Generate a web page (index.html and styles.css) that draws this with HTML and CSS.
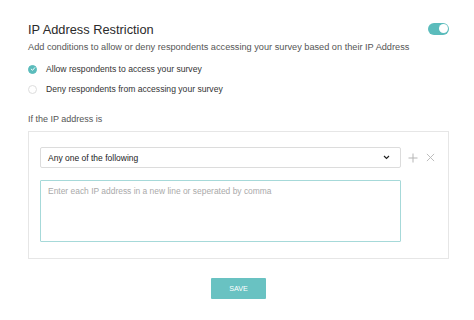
FILE: index.html
```html
<!DOCTYPE html>
<html>
<head>
<meta charset="utf-8">
<link rel="stylesheet" href="styles.css">
</head>
<body>
<div class="page">
  <div class="header">
    <h1 class="title">IP Address Restriction</h1>
    <span class="toggle"><span class="knob"></span></span>
  </div>
  <p class="subtitle">Add conditions to allow or deny respondents accessing your survey based on their IP Address</p>
  <div class="options">
    <label class="option"><span class="radio checked"><svg viewBox="0 0 10 10" width="6" height="6"><path d="M2 5.2 L4.2 7.2 L8 2.8" fill="none" stroke="#fff" stroke-width="1.6" stroke-linecap="round" stroke-linejoin="round"/></svg></span>Allow respondents to access your survey</label>
    <label class="option"><span class="radio"></span>Deny respondents from accessing your survey</label>
  </div>
  <div class="cond-label">If the IP address is</div>
  <div class="box">
    <div class="row">
      <div class="select">
        <span>Any one of the following</span>
        <svg class="chev" viewBox="0 0 8 6" width="7" height="5"><path d="M1 1.2 L4 4.2 L7 1.2" fill="none" stroke="#222" stroke-width="1.4"/></svg>
      </div>
      <div class="actions">
        <svg viewBox="0 0 10 10" width="10" height="10"><path d="M5 0.5 V9.5 M0.5 5 H9.5" stroke="#b5b5b5" stroke-width="1"/></svg>
        <svg viewBox="0 0 10 10" width="9" height="9"><path d="M1 1 L9 9 M9 1 L1 9" stroke="#b5b5b5" stroke-width="1"/></svg>
      </div>
    </div>
    <div class="textarea">Enter each IP address in a new line or seperated by comma</div>
  </div>
  <div class="footer"><button class="save">SAVE</button></div>
</div>
</body>
</html>
```
FILE: styles.css
```css
html, body { margin: 0; padding: 0; background: #fff; }
body { font-family: "Liberation Sans", Arial, sans-serif; color: #333; }
.page { width: 421px; padding: 22px 0 0 28px; }
.header { display: flex; align-items: center; justify-content: space-between; height: 15px; }
.title { margin: 0; font-size: 12.8px; font-weight: normal; color: #2b2b2b; line-height: 15px; }
.toggle { width: 21px; height: 12px; border-radius: 6px; background: #5bbcbc; position: relative; display: inline-block; margin-top: -2px; }
.knob { position: absolute; right: 1.5px; top: 1.5px; width: 9px; height: 9px; border-radius: 50%; background: #fff; }
.subtitle { margin: 4px 0 0; font-size: 9.2px; color: #555; line-height: 12px; }
.options { display: flex; flex-direction: column; gap: 8px; margin-top: 10px; }
.option { display: flex; align-items: center; font-size: 8.6px; color: #333; height: 12px; }
.radio { width: 9px; height: 9px; border-radius: 50%; border: 1px solid #ddd; box-sizing: border-box; margin-right: 9px; display: inline-flex; align-items: center; justify-content: center; }
.radio.checked { background: #5bbcbc; border-color: #5bbcbc; }
.cond-label { margin-top: 18px; font-size: 9px; color: #555; line-height: 12px; }
.box { margin-top: 6px; border: 1px solid #e6e6e6; height: 128px; box-sizing: border-box; padding: 15px 0 0 11px; }
.row { display: flex; align-items: center; }
.select { width: 361px; height: 21px; box-sizing: border-box; border: 1px solid #dcdcdc; border-radius: 2px; display: flex; align-items: center; justify-content: space-between; padding: 0 10px 0 7px; font-size: 8.5px; color: #222; }
.actions { display: flex; align-items: center; gap: 8px; margin-left: 7px; }
.textarea { margin-top: 12px; width: 361px; height: 62px; box-sizing: border-box; border: 1px solid #a6d9d9; border-radius: 1px; padding: 5px 7px; font-size: 8.45px; color: #aaa; }
.footer { display: flex; justify-content: center; margin-top: 19px; }
.save { width: 55px; height: 21px; border: none; background: #69c2c2; color: #fff; font-family: "Liberation Sans", Arial, sans-serif; font-size: 7.2px; padding: 0; border-radius: 1px; }
```
